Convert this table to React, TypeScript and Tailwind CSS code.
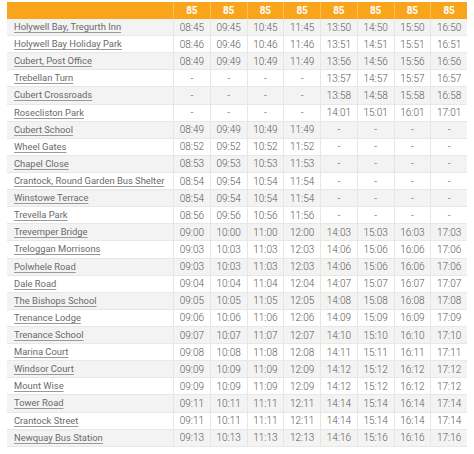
import React from "react";

const rows: [string, string[]][] = [
  ["Holywell Bay, Tregurth Inn", ["08:45", "09:45", "10:45", "11:45", "13:50", "14:50", "15:50", "16:50"]],
  ["Holywell Bay Holiday Park", ["08:46", "09:46", "10:46", "11:46", "13:51", "14:51", "15:51", "16:51"]],
  ["Cubert, Post Office", ["08:49", "09:49", "10:49", "11:49", "13:56", "14:56", "15:56", "16:56"]],
  ["Trebellan Turn", ["-", "-", "-", "-", "13:57", "14:57", "15:57", "16:57"]],
  ["Cubert Crossroads", ["-", "-", "-", "-", "13:58", "14:58", "15:58", "16:58"]],
  ["Rosecliston Park", ["-", "-", "-", "-", "14:01", "15:01", "16:01", "17:01"]],
  ["Cubert School", ["08:49", "09:49", "10:49", "11:49", "-", "-", "-", "-"]],
  ["Wheel Gates", ["08:52", "09:52", "10:52", "11:52", "-", "-", "-", "-"]],
  ["Chapel Close", ["08:53", "09:53", "10:53", "11:53", "-", "-", "-", "-"]],
  ["Crantock, Round Garden Bus Shelter", ["08:54", "09:54", "10:54", "11:54", "-", "-", "-", "-"]],
  ["Winstowe Terrace", ["08:54", "09:54", "10:54", "11:54", "-", "-", "-", "-"]],
  ["Trevella Park", ["08:56", "09:56", "10:56", "11:56", "-", "-", "-", "-"]],
  ["Trevemper Bridge", ["09:00", "10:00", "11:00", "12:00", "14:03", "15:03", "16:03", "17:03"]],
  ["Treloggan Morrisons", ["09:03", "10:03", "11:03", "12:03", "14:06", "15:06", "16:06", "17:06"]],
  ["Polwhele Road", ["09:03", "10:03", "11:03", "12:03", "14:06", "15:06", "16:06", "17:06"]],
  ["Dale Road", ["09:04", "10:04", "11:04", "12:04", "14:07", "15:07", "16:07", "17:07"]],
  ["The Bishops School", ["09:05", "10:05", "11:05", "12:05", "14:08", "15:08", "16:08", "17:08"]],
  ["Trenance Lodge", ["09:06", "10:06", "11:06", "12:06", "14:09", "15:09", "16:09", "17:09"]],
  ["Trenance School", ["09:07", "10:07", "11:07", "12:07", "14:10", "15:10", "16:10", "17:10"]],
  ["Marina Court", ["09:08", "10:08", "11:08", "12:08", "14:11", "15:11", "16:11", "17:11"]],
  ["Windsor Court", ["09:09", "10:09", "11:09", "12:09", "14:12", "15:12", "16:12", "17:12"]],
  ["Mount Wise", ["09:09", "10:09", "11:09", "12:09", "14:12", "15:12", "16:12", "17:12"]],
  ["Tower Road", ["09:11", "10:11", "11:11", "12:11", "14:14", "15:14", "16:14", "17:14"]],
  ["Crantock Street", ["09:11", "10:11", "11:11", "12:11", "14:14", "15:14", "16:14", "17:14"]],
  ["Newquay Bus Station", ["09:13", "10:13", "11:13", "12:13", "14:16", "15:16", "16:16", "17:16"]],
];

export default function App() {
  return (
    <div className="w-[474px] h-[454px] bg-white pt-[2px] pl-[7px]" style={{ fontFamily: "Roboto, 'Noto Sans', sans-serif" }}>
      <div className="w-[460px]">
        <div className="grid grid-cols-[166px_repeat(8,1fr)] h-[17px] bg-[#f8a51b]">
          <div />
          {Array.from({ length: 8 }).map((_, i) => (
            <div key={i} className="flex items-center justify-center text-[10px] font-bold text-white border-l border-[#fbbf55]">
              85
            </div>
          ))}
        </div>
        {rows.map(([name, times], r) => (
          <div
            key={name}
            className={`grid grid-cols-[166px_repeat(8,1fr)] h-[17.12px] border-b border-[#e8e8e8] ${r % 2 === 0 ? "bg-[#f3f3f3]" : "bg-white"}`}
          >
            <div className="flex items-center pl-[7px] text-[9.4px] text-[#6a6a6a] underline underline-offset-[1.5px] decoration-[#9a9a9a] whitespace-nowrap overflow-hidden">
              {name}
            </div>
            {times.map((t, i) => (
              <div key={i} className="flex items-center justify-center text-[10px] font-light text-[#5a5a5a] border-l border-[#e6e6e6]">
                {t}
              </div>
            ))}
          </div>
        ))}
      </div>
    </div>
  );
}
